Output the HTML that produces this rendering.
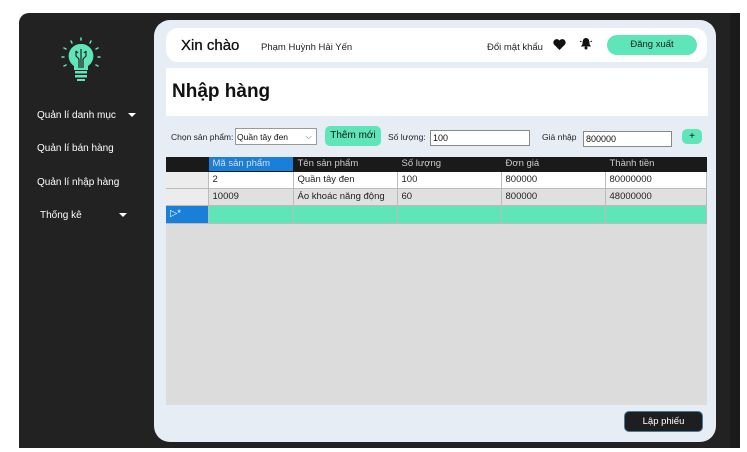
<!DOCTYPE html>
<html><head><meta charset="utf-8"><style>
*{margin:0;padding:0;box-sizing:border-box}
body{width:747px;height:452px;background:#fff;position:relative;overflow:hidden;font-family:"Liberation Sans","DejaVu Sans",sans-serif;}
.a{position:absolute}
.win{left:19px;top:13px;width:721px;height:435px;background:#222;border-top-left-radius:10px}
.side{color:#fff;font-size:10px}
.panel{left:154px;top:20px;width:562px;height:422px;background:#e7edf5;border-radius:16px}
.hdr{left:166px;top:28px;width:541px;height:34px;background:#fff;border-radius:12px}
.tbl td{border-right:1px solid #bbb;border-bottom:1px solid #bbb;font-size:9.5px;padding:0 0 0 4px;color:#222;vertical-align:middle;line-height:12px}
.tbl tr.h td{background:#1a1a1a;color:#ccc;border-color:#1a1a1a}
</style></head><body>
<div class="a win"></div>
<div class="a" style="left:730px;top:13px;width:10px;height:435px;background:#1a1a1a"></div>
<svg class="a" style="left:60px;top:36px" width="42" height="46" viewBox="0 0 42 46">
<g stroke="#5ee6b8" stroke-width="1.5" stroke-linecap="round">
<line x1="21" y1="2" x2="21" y2="4"/><line x1="11" y1="5" x2="12" y2="7"/><line x1="31" y1="5" x2="30" y2="7"/>
<line x1="4" y1="12" x2="6" y2="13"/><line x1="38" y1="12" x2="36" y2="13"/><line x1="2" y1="21" x2="4" y2="21"/><line x1="38" y1="21" x2="40" y2="21"/>
<line x1="4" y1="30" x2="6" y2="29"/><line x1="38" y1="30" x2="36" y2="29"/></g>
<path d="M21 8a12 12 0 0 0-7 22v4h14v-4a12 12 0 0 0-7-22z" fill="#5ee6b8"/>
<path d="M16 15v5l3 3v9M21 13v19M26 15v5l-3 3v9M18 17l-2-2M24 17l2-2" stroke="#222" stroke-width="1.2" fill="none"/>
<rect x="15" y="35" width="12" height="2.5" fill="#5ee6b8"/><rect x="15" y="39" width="12" height="2.5" fill="#5ee6b8"/><rect x="17" y="43" width="8" height="2" fill="#5ee6b8"/>
</svg>
<div class="a side" style="left:37px;top:110px">Quản lí danh mục</div>
<div class="a" style="left:128px;top:113px;border:4px solid transparent;border-top:4px solid #fff"></div>
<div class="a side" style="left:37px;top:143px">Quản lí bán hàng</div>
<div class="a side" style="left:37px;top:177px">Quản lí nhập hàng</div>
<div class="a side" style="left:40px;top:210px">Thống kê</div>
<div class="a" style="left:119px;top:213px;border:4px solid transparent;border-top:4px solid #fff"></div>

<div class="a panel"></div>
<div class="a hdr"></div>
<div class="a" style="left:181px;top:37px;font-size:15px;color:#111;-webkit-text-stroke:0.3px #111">Xin chào</div>
<div class="a" style="left:261px;top:42px;font-size:9.5px;color:#222">Phạm Huỳnh Hải Yến</div>
<div class="a" style="left:487px;top:42px;font-size:9.5px;color:#222">Đổi mật khẩu</div>
<svg class="a" style="left:553px;top:39px" width="13" height="11" viewBox="0 0 13 11"><path d="M6.5 11L1 5.5A3 3 0 0 1 6.5 1.5 3 3 0 0 1 12 5.5z" fill="#111"/></svg>
<svg class="a" style="left:579px;top:37px" width="14" height="13" viewBox="0 0 14 13"><path d="M7 1c-3 0-3.5 3-3.5 6L2 9.5h10L10.5 7c0-3-.5-6-3.5-6z" fill="#111"/><circle cx="7" cy="11" r="1.5" fill="#111"/><path d="M1 4l1.5 1M13 4l-1.5 1" stroke="#111"/></svg>
<div class="a" style="left:607px;top:35px;width:90px;height:20px;background:#5ee6b8;border-radius:10px;font-size:9.5px;text-align:center;line-height:19px;color:#222">Đăng xuất</div>

<div class="a" style="left:166px;top:68px;width:542px;height:48px;background:#fff"></div>
<div class="a" style="left:172px;top:81px;font-size:19px;font-weight:bold;color:#111">Nhập hàng</div>

<div class="a" style="left:171px;top:132px;font-size:8.5px;color:#222">Chọn sản phẩm:</div>
<div class="a" style="left:235px;top:128px;width:82px;height:17px;background:#fff;border:1px solid #999;font-size:8.5px;padding:3px 1px;color:#111">Quần tây đen<span style="position:absolute;right:4px;top:2px;color:#666">⌵</span></div>
<div class="a" style="left:325px;top:126px;width:56px;height:20px;background:#5ee6b8;border-radius:5px;font-size:10px;text-align:center;line-height:20px;color:#111">Thêm mới</div>
<div class="a" style="left:388px;top:132px;font-size:8.5px;color:#222">Số lượng:</div>
<div class="a" style="left:430px;top:130px;width:100px;height:16px;background:#fff;border:1px solid #888;font-size:9px;padding:2px;color:#111">100</div>
<div class="a" style="left:542px;top:132px;font-size:8.5px;color:#222">Giá nhập</div>
<div class="a" style="left:583px;top:131px;width:89px;height:16px;background:#fff;border:1px solid #888;font-size:9px;padding:2px;color:#111">800000</div>
<div class="a" style="left:682px;top:129px;width:20px;height:15px;background:#5ee6b8;border-radius:5px;font-size:10px;text-align:center;line-height:15px;color:#111">+</div>

<div class="a" style="left:166px;top:157px;width:541px;height:248px;background:#dcdcdc"></div>
<table class="a tbl" style="left:166px;top:157px;width:541px;border-collapse:collapse">
<tr class="h" style="height:14px"><td style="width:42px"></td><td style="width:85px;background:#1a7fd8;color:#dde">Mã sản phẩm</td><td style="width:104px">Tên sản phẩm</td><td style="width:104px">Số lượng</td><td style="width:104px">Đơn giá</td><td>Thành tiền</td></tr>
<tr style="height:17px;background:#fff"><td style="background:#ececec"></td><td>2</td><td>Quần tây đen</td><td>100</td><td>800000</td><td>80000000</td></tr>
<tr style="height:17px;background:#e0e0e0"><td style="background:#ececec"></td><td>10009</td><td>Áo khoác năng động</td><td>60</td><td>800000</td><td>48000000</td></tr>
<tr style="height:18px;background:#5ee6b8"><td style="background:#1a7fd8;color:#fff">▷*</td><td></td><td></td><td></td><td></td><td></td></tr>
</table>

<div class="a" style="left:624px;top:411px;width:79px;height:21px;background:#1e1e1e;border:1px solid #4a7aa0;border-radius:5px;color:#fff;font-size:9.5px;text-align:center;line-height:19px">Lập phiếu</div>
</body></html>
